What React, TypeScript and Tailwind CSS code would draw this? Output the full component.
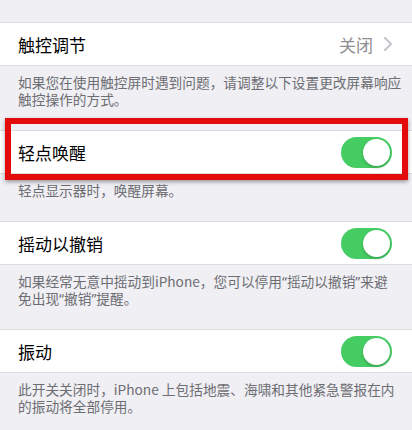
import React from "react";

const FONT = { fontFamily: '"Noto Sans CJK SC", "Noto Sans", sans-serif' };

function Toggle() {
  return (
    <div className="relative h-[31px] w-[51px] rounded-full bg-[#45cc63]">
      <div className="absolute right-[2px] top-[2px] h-[27px] w-[27px] rounded-full bg-white shadow-[0_2px_3px_rgba(0,0,0,0.18)]" />
    </div>
  );
}

function Chevron() {
  return (
    <svg width="8" height="14" viewBox="0 0 8 14" fill="none">
      <polyline points="1,1 7,7 1,13" stroke="#c4c4c9" strokeWidth="2" strokeLinecap="round" strokeLinejoin="round" />
    </svg>
  );
}

function Q({ children }: { children: React.ReactNode }) {
  return <span style={{ fontFamily: '"Noto Sans", sans-serif' }}>{children}</span>;
}

function Row({ label, right }: { label: string; right: React.ReactNode }) {
  return (
    <div className="flex h-[44px] items-center justify-between border-y border-[#dcdce0] bg-white pl-[18px] pr-[20px]">
      <span className="text-[17px] leading-none text-black">{label}</span>
      {right}
    </div>
  );
}

function Footer({ lines }: { lines: React.ReactNode[] }) {
  return (
    <div className="px-[18px] pb-[22px] pt-[8px] text-[13.7px] leading-[17px] text-[#6d6d72]">
      {lines.map((l, i) => (
        <div key={i} className="whitespace-nowrap">
          {l}
        </div>
      ))}
    </div>
  );
}

export default function App() {
  return (
    <div className="h-[430px] w-[412px] overflow-hidden bg-[#efeff4]" style={FONT}>
      <div className="h-[22px]" />

      <Row
        label="触控调节"
        right={
          <div className="flex items-center gap-[11px]">
            <span className="text-[17px] leading-none text-[#8e8e93]">关闭</span>
            <Chevron />
          </div>
        }
      />
      <Footer lines={["如果您在使用触控屏时遇到问题，请调整以下设置更改屏幕响应", "触控操作的方式。"]} />

      <div className="relative">
        <Row label="轻点唤醒" right={<Toggle />} />
        <div className="pointer-events-none absolute left-[5px] right-[4px] top-[-12px] bottom-[-6px] border-[6px] border-[#e30b0b] shadow-[0_2px_4px_rgba(0,0,0,0.35)]" />
      </div>
      <Footer lines={["轻点显示器时，唤醒屏幕。"]} />

      <Row label="摇动以撤销" right={<Toggle />} />
      <Footer
        lines={[
          <>
            如果经常无意中摇动到iPhone，您可以停用<Q>“</Q>摇动以撤销<Q>”</Q>来避
          </>,
          <>
            免出现<Q>“</Q>撤销<Q>”</Q>提醒。
          </>,
        ]}
      />

      <Row label="振动" right={<Toggle />} />
      <Footer lines={["此开关关闭时，iPhone 上包括地震、海啸和其他紧急警报在内", "的振动将全部停用。"]} />
    </div>
  );
}
